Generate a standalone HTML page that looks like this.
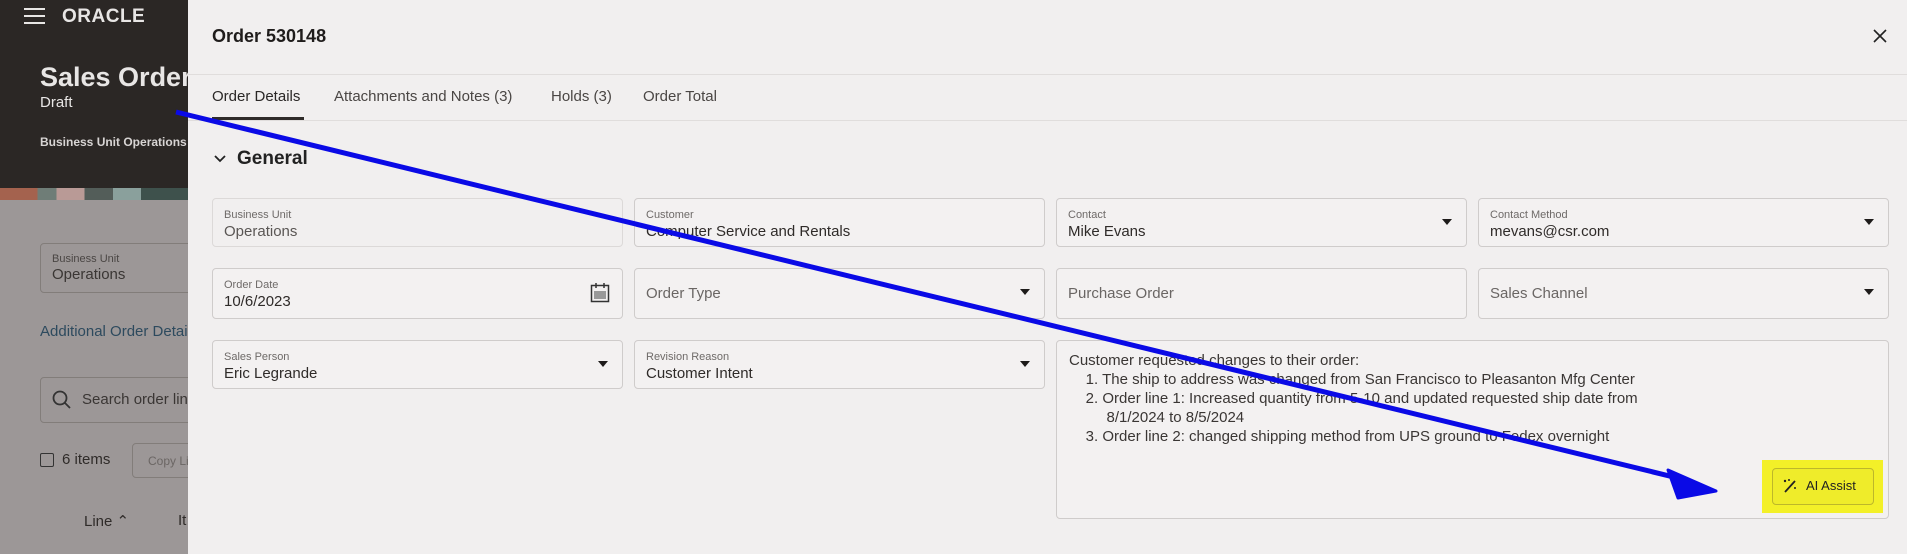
<!DOCTYPE html>
<html><head><meta charset="utf-8"><style>
*{margin:0;padding:0;box-sizing:border-box}
body{width:1907px;height:554px;overflow:hidden;position:relative;font-family:"Liberation Sans",sans-serif;background:#f1efef}
.a{position:absolute;white-space:nowrap}
.left{position:absolute;left:0;top:0;width:188px;height:554px;background:#9c9797}
.hdr{position:absolute;left:0;top:0;width:188px;height:188px;background:#2b2725}
.strip{position:absolute;left:0;top:188px;width:188px;height:12px;background:linear-gradient(90deg,#a4624e 0 20%,#6f7d77 20% 30%,#b99a96 30% 45%,#535d59 45% 60%,#8aa09c 60% 75%,#3e514c 75% 100%)}
.panel{position:absolute;left:188px;top:0;width:1719px;height:554px;background:#f1efef}
.f{position:absolute;border:1.5px solid #cfcccb;border-radius:4px;background:#f3f1f1}
.lb{position:absolute;left:11px;top:10px;font-size:11px;color:#6e6a68}
.v{position:absolute;left:11px;top:24px;font-size:15px;color:#2f2b29}
.ph{position:absolute;left:11px;top:16px;font-size:15px;color:#6a6664}
.dd{position:absolute;right:14px;top:20px;width:0;height:0;border-left:5px solid transparent;border-right:5px solid transparent;border-top:6px solid #1d1b1a}
</style></head><body>
<div class="left"></div>
<div class="hdr"></div>
<div class="strip"></div>
<div class="a" style="left:24px;top:8px;width:21px;height:16px;border-top:2.5px solid #e8e6e5;border-bottom:2.5px solid #e8e6e5"><div style="margin-top:4.5px;height:2.5px;background:#e8e6e5"></div></div>
<div class="a" style="left:62px;top:6px;font-size:19px;font-weight:bold;color:#e8e6e5;letter-spacing:0.5px">ORACLE</div>
<div class="a" style="left:40px;top:62px;font-size:27px;font-weight:bold;color:#e8e6e5">Sales Order</div>
<div class="a" style="left:40px;top:94px;font-size:15px;color:#e8e6e5">Draft</div>
<div class="a" style="left:40px;top:135px;font-size:12px;font-weight:bold;color:#d8d5d4">Business Unit Operations</div>
<div class="a" style="left:40px;top:243px;width:160px;height:50px;border:1.5px solid #827d7a;border-radius:4px"></div>
<div class="a" style="left:52px;top:253px;font-size:11px;color:#4a4644">Business Unit</div>
<div class="a" style="left:52px;top:266px;font-size:15px;color:#3a3634">Operations</div>
<div class="a" style="left:40px;top:323px;font-size:15px;color:#2d4a5e">Additional Order Details</div>
<div class="a" style="left:40px;top:377px;width:160px;height:46px;border:1.5px solid #827d7a;border-radius:4px"></div>
<svg class="a" style="left:52px;top:390px" width="20" height="20"><circle cx="8" cy="8" r="6.5" fill="none" stroke="#333" stroke-width="1.8"/><path d="M13 13 L18 18" stroke="#333" stroke-width="1.8"/></svg>
<div class="a" style="left:82px;top:391px;font-size:15px;color:#3a3634">Search order lines</div>
<div class="a" style="left:40px;top:453px;width:14px;height:14px;border:1.5px solid #333;border-radius:2px"></div>
<div class="a" style="left:62px;top:451px;font-size:15px;color:#2f2b29">6 items</div>
<div class="a" style="left:132px;top:443px;width:70px;height:35px;border:1.5px solid #827d7a;border-radius:4px"></div>
<div class="a" style="left:148px;top:454px;font-size:12px;color:#6b6664">Copy Lines</div>
<div class="a" style="left:84px;top:512px;font-size:15px;color:#2f2b29">Line ⌃</div>
<div class="a" style="left:178px;top:512px;font-size:15px;color:#2f2b29">It</div>

<div class="panel"></div>
<div class="a" style="left:212px;top:26px;font-size:18px;font-weight:bold;color:#1f1c1b">Order 530148</div>
<svg class="a" style="left:1873px;top:29px" width="14" height="14"><path d="M1 1L13 13M13 1L1 13" stroke="#222" stroke-width="1.6"/></svg>
<div class="a" style="left:188px;top:74px;width:1719px;height:1px;background:#e0dddc"></div>
<div class="a" style="left:212px;top:88px;font-size:15px;color:#2a2726">Order Details</div>
<div class="a" style="left:334px;top:88px;font-size:15px;color:#4a4644">Attachments and Notes (3)</div>
<div class="a" style="left:551px;top:88px;font-size:15px;color:#4a4644">Holds (3)</div>
<div class="a" style="left:643px;top:88px;font-size:15px;color:#4a4644">Order Total</div>
<div class="a" style="left:188px;top:120px;width:1719px;height:1px;background:#e0dddc"></div>
<div class="a" style="left:212px;top:117px;width:92px;height:3px;background:#2f2b29"></div>
<svg class="a" style="left:214px;top:154px" width="12" height="10"><path d="M1 2L6 7L11 2" fill="none" stroke="#222" stroke-width="1.8"/></svg>
<div class="a" style="left:237px;top:148px;font-size:19px;font-weight:bold;color:#222">General</div>

<div class="f" style="left:212px;top:198px;width:411px;height:49px;background:#f1efef;border-color:#dcd9d8"><div class="lb">Business Unit</div><div class="v" style="color:#5a5654">Operations</div></div>
<div class="f" style="left:634px;top:198px;width:411px;height:49px"><div class="lb">Customer</div><div class="v">Computer Service and Rentals</div></div>
<div class="f" style="left:1056px;top:198px;width:411px;height:49px"><div class="lb">Contact</div><div class="v">Mike Evans</div><div class="dd"></div></div>
<div class="f" style="left:1478px;top:198px;width:411px;height:49px"><div class="lb">Contact Method</div><div class="v">mevans@csr.com</div><div class="dd"></div></div>

<div class="f" style="left:212px;top:268px;width:411px;height:51px"><div class="lb">Order Date</div><div class="v">10/6/2023</div>
<svg style="position:absolute;right:12px;top:13px" width="20" height="22"><rect x="1.5" y="3.5" width="17" height="16" fill="none" stroke="#333" stroke-width="1.5"/><rect x="4" y="9" width="12" height="8" fill="#999"/><path d="M6 1V6M14 1V6" stroke="#333" stroke-width="1.5"/></svg></div>
<div class="f" style="left:634px;top:268px;width:411px;height:51px"><div class="ph">Order Type</div><div class="dd"></div></div>
<div class="f" style="left:1056px;top:268px;width:411px;height:51px"><div class="ph">Purchase Order</div></div>
<div class="f" style="left:1478px;top:268px;width:411px;height:51px"><div class="ph">Sales Channel</div><div class="dd"></div></div>

<div class="f" style="left:212px;top:340px;width:411px;height:49px"><div class="lb">Sales Person</div><div class="v">Eric Legrande</div><div class="dd"></div></div>
<div class="f" style="left:634px;top:340px;width:411px;height:49px"><div class="lb">Revision Reason</div><div class="v">Customer Intent</div><div class="dd"></div></div>
<div class="f" style="left:1056px;top:340px;width:833px;height:179px">
<div style="position:absolute;left:12px;top:10px;font-size:15px;line-height:19px;color:#3a3634;white-space:nowrap">Customer requested changes to their order:<br>
&nbsp;&nbsp;&nbsp;&nbsp;1. The ship to address was changed from San Francisco to Pleasanton Mfg Center<br>
&nbsp;&nbsp;&nbsp;&nbsp;2. Order line 1: Increased quantity from 5-10 and updated requested ship date from<br>
&nbsp;&nbsp;&nbsp;&nbsp;&nbsp;&nbsp;&nbsp;&nbsp;&nbsp;8/1/2024 to 8/5/2024<br>
&nbsp;&nbsp;&nbsp;&nbsp;3. Order line 2: changed shipping method from UPS ground to Fedex overnight</div></div>
<div class="a" style="left:1762px;top:460px;width:121px;height:53px;background:#f3f028"></div>
<div class="a" style="left:1772px;top:468px;width:102px;height:37px;border:1.5px solid #bdb72a;border-radius:4px;background:#efec2a"></div>
<svg class="a" style="left:1782px;top:478px" width="16" height="16"><path d="M3 14L13 3" stroke="#222" stroke-width="1.8"/><circle cx="3" cy="3" r="1.2" fill="#222"/><circle cx="7" cy="2" r="1" fill="#222"/><circle cx="13" cy="10" r="1" fill="#222"/></svg>
<div class="a" style="left:1806px;top:478px;font-size:13px;color:#222">AI Assist</div>

<svg class="a" style="left:0;top:0" width="1907" height="554"><path d="M176 112L1690 481" stroke="#0a0ae6" stroke-width="5"/><path d="M1716 491L1668 470L1678 498Z" fill="#0a0ae6" stroke="#0a0ae6" stroke-width="3" stroke-linejoin="round"/></svg>
</body></html>
